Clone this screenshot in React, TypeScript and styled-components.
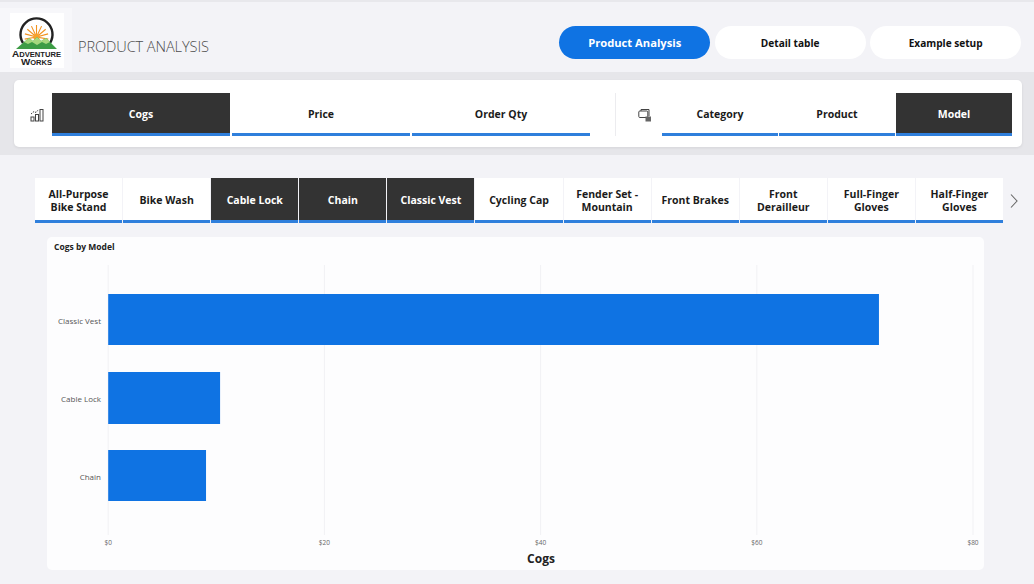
import styled, { createGlobalStyle } from 'styled-components';

const Global = createGlobalStyle`
  html, body {
    margin: 0;
    padding: 0;
    background: #f3f3f7;
    font-family: "Open Sans", "Noto Sans", "Liberation Sans", sans-serif;
  }
  * { box-sizing: border-box; }
`;

const Page = styled.div`
  width: 1034px;
  height: 584px;
  overflow: hidden;
  display: flex;
  flex-direction: column;
  background: #f3f3f7;
`;

const TopLine = styled.div`
  height: 2px;
  background: #e8e8ec;
`;

const Header = styled.header`
  height: 70px;
  display: flex;
  align-items: flex-start;
  padding: 6px 13px 0 0;
`;

const LogoBox = styled.div`
  width: 72px;
  height: 64px;
  padding: 5px 8px 4px 10px;
  background: #f7f7fa;
`;

const LogoFace = styled.div`
  width: 54px;
  height: 55px;
  background: #fff;
`;

const PageTitle = styled.h1`
  margin: 28px 0 0 6px;
  font-size: 14.6px;
  line-height: 20px;
  font-weight: 300;
  color: #4c4c4c;
  letter-spacing: -0.1px;
`;

const Nav = styled.nav`
  margin: 18px 0 0 auto;
  display: flex;
  gap: 4.8px;
`;

const Pill = styled.div<{ $active?: boolean }>`
  width: 150.7px;
  height: 33px;
  border-radius: 17px;
  display: flex;
  align-items: center;
  justify-content: center;
  font-size: ${p => (p.$active ? '11.2px' : '10.1px')};
  font-weight: 700;
  background: ${p => (p.$active ? '#0f73e3' : '#fff')};
  color: ${p => (p.$active ? '#fff' : '#111')};
`;

const FilterBand = styled.section`
  height: 83px;
  padding: 8px 12px 8px 14px;
  background: #e6e6ea;
`;

const FilterCard = styled.div`
  height: 67px;
  border-radius: 5px;
  background: #fff;
  display: flex;
  align-items: flex-start;
  padding-top: 13px;
  box-shadow: 0 1px 3px rgba(0, 0, 0, 0.08);
`;

const IconCell = styled.div<{ $w: number; $inset: number }>`
  width: ${p => p.$w}px;
  height: 43px;
  padding-left: ${p => p.$inset}px;
  display: flex;
  align-items: center;
  justify-content: center;
  flex: none;
`;

const TabGroup = styled.div<{ $gap: number }>`
  display: flex;
  gap: ${p => p.$gap}px;
`;

const Tab = styled.div<{ $w: number; $h?: number; $on?: boolean }>`
  width: ${p => p.$w}px;
  height: ${p => p.$h ?? 43}px;
  flex: none;
  display: flex;
  align-items: center;
  justify-content: center;
  text-align: center;
  white-space: pre-line;
  font-weight: 700;
  font-size: 10.5px;
  line-height: 13px;
  padding-top: 3px;
  background: ${p => (p.$on ? '#333333' : '#fff')};
  color: ${p => (p.$on ? '#fff' : '#1b1b1b')};
  border-bottom: 3px solid #2f7fdc;
`;

const Divider = styled.div`
  width: 1px;
  height: 43px;
  margin-left: 25px;
  background: #ececef;
  flex: none;
`;

const Body = styled.main`
  flex: 1;
  padding: 23px 0 0 35px;
`;

const ModelStrip = styled.div`
  display: flex;
  align-items: center;
  gap: 1px;
`;

const Chevron = styled.div`
  width: 20px;
  height: 20px;
  display: flex;
  align-items: center;
  justify-content: center;
`;

const ChartCard = styled.section`
  position: relative;
  width: 937px;
  height: 333px;
  margin: 14px 0 0 12px;
  background: #fdfdfe;
  border-radius: 5px;
`;

const ChartTitle = styled.h2`
  position: absolute;
  left: 7px;
  top: 4px;
  margin: 0;
  font-size: 8.5px;
  line-height: 12px;
  font-weight: 700;
  color: #222;
`;

const ChartSvg = styled.svg`
  display: block;
  font-family: "Open Sans", "Noto Sans", sans-serif;
`;

const metrics = [
  { label: 'Cogs', on: true },
  { label: 'Price' },
  { label: 'Order Qty' },
];

const levels = [
  { label: 'Category' },
  { label: 'Product' },
  { label: 'Model', on: true },
];

const models = [
  { label: 'All-Purpose\nBike Stand' },
  { label: 'Bike Wash' },
  { label: 'Cable Lock', on: true },
  { label: 'Chain', on: true },
  { label: 'Classic Vest', on: true },
  { label: 'Cycling Cap' },
  { label: 'Fender Set -\nMountain' },
  { label: 'Front Brakes' },
  { label: 'Front\nDerailleur' },
  { label: 'Full-Finger\nGloves' },
  { label: 'Half-Finger\nGloves' },
];

// chart coordinates are relative to the card
const x0 = 61.2;
const perDollar = 10.81;
const bars = [
  { label: 'Classic Vest', value: 71.3, y: 57, h: 51 },
  { label: 'Cable Lock', value: 10.35, y: 135, h: 52 },
  { label: 'Chain', value: 9.05, y: 213, h: 51 },
];
const ticks = [0, 20, 40, 60, 80];
const rays = [-90, -65, -40, -115, -140, -165, -15, 10, 170];

function Logo() {
  return (
    <svg width="54" height="55" viewBox="0 0 54 55">
      <g stroke="#f2921f" strokeWidth="1.1">
        {rays.map(a => (
          <line
            key={a}
            x1="26.5"
            y1="24"
            x2={26.5 + 12 * Math.cos((a * Math.PI) / 180)}
            y2={24 + 12 * Math.sin((a * Math.PI) / 180)}
          />
        ))}
      </g>
      <circle cx="26.5" cy="24" r="3.2" fill="#f6a12c" />
      <path d="M13 30 A16 16 0 1 1 40 30" fill="none" stroke="#222" strokeWidth="2.4" />
      <path d="M6 36 L14 29 L19 25 L23 28 L27 24 L31 28 L36 25 L40 29 L47 36 Z" fill="#3d9c45" />
      <path d="M14 29 L19 25 L23 28 L27 24 L31 28 L36 25 L40 29 L36 31 L32 29 L27 32 L22 29 L18 31 Z" fill="#a6d77e" />
      <text x="26.5" y="44" textAnchor="middle" fontFamily="Liberation Sans, sans-serif" fontWeight="700" fill="#222" fontSize="6.4" textLength="49" lengthAdjust="spacingAndGlyphs">
        <tspan fontSize="8.4">A</tspan>DVENTURE
      </text>
      <text x="26.5" y="51.5" textAnchor="middle" fontFamily="Liberation Sans, sans-serif" fontWeight="700" fill="#222" fontSize="6.4" textLength="31" lengthAdjust="spacingAndGlyphs">
        <tspan fontSize="8.4">W</tspan>ORKS
      </text>
    </svg>
  );
}

function MeasureIcon() {
  return (
    <svg width="14" height="14" viewBox="0 0 14 14" fill="none" stroke="#444" strokeWidth="1">
      <rect x="1" y="9" width="3" height="4" />
      <rect x="5.5" y="6.5" width="3" height="6.5" />
      <rect x="10" y="1.5" width="3" height="11.5" />
      <path d="M1 6 L4 3.5 L6 4.5 L8.5 1.5" strokeDasharray="1.5 1" />
    </svg>
  );
}

function LevelIcon() {
  return (
    <svg width="14" height="14" viewBox="0 0 14 14" fill="none" stroke="#444" strokeWidth="1">
      <path d="M3 3 V1.5 H11 V8" />
      <rect x="0.8" y="3" width="9" height="6.5" rx="1" />
      <rect x="7.5" y="8.5" width="5.5" height="5" fill="#666" stroke="none" />
    </svg>
  );
}

function Cogs() {
  return (
    <ChartSvg width="937" height="333" viewBox="0 0 937 333">
      {ticks.map(t => (
        <line key={t} x1={x0 + t * perDollar} x2={x0 + t * perDollar} y1="28" y2="298" stroke="#f1f1f4" strokeWidth="1" />
      ))}
      {bars.map(b => (
        <g key={b.label}>
          <rect x={x0} y={b.y} width={b.value * perDollar} height={b.h} fill="#0f73e3" />
          <text x="54" y={b.y + b.h / 2 + 4} textAnchor="end" fontSize="8" fill="#555">{b.label}</text>
        </g>
      ))}
      {ticks.map(t => (
        <text key={t} x={x0 + t * perDollar} y="308" textAnchor="middle" fontSize="6.5" fill="#666">${t}</text>
      ))}
      <text x="494" y="326" textAnchor="middle" fontSize="12" fontWeight="700" fill="#222">Cogs</text>
    </ChartSvg>
  );
}

export default function App() {
  return (
    <Page>
      <Global />
      <TopLine />
      <Header>
        <LogoBox><LogoFace><Logo /></LogoFace></LogoBox>
        <PageTitle>PRODUCT ANALYSIS</PageTitle>
        <Nav>
          <Pill $active>Product Analysis</Pill>
          <Pill>Detail table</Pill>
          <Pill>Example setup</Pill>
        </Nav>
      </Header>
      <FilterBand>
        <FilterCard>
          <IconCell $w={38} $inset={8}><MeasureIcon /></IconCell>
          <TabGroup $gap={2}>
            {metrics.map(m => (
              <Tab key={m.label} $w={178} $on={m.on}>{m.label}</Tab>
            ))}
          </TabGroup>
          <Divider />
          <IconCell $w={46} $inset={12}><LevelIcon /></IconCell>
          <TabGroup $gap={1}>
            {levels.map(l => (
              <Tab key={l.label} $w={116} $on={l.on}>{l.label}</Tab>
            ))}
          </TabGroup>
        </FilterCard>
      </FilterBand>
      <Body>
        <ModelStrip>
          {models.map(m => (
            <Tab key={m.label} $w={87.1} $h={45} $on={m.on}>{m.label}</Tab>
          ))}
          <Chevron>
            <svg width="10" height="16" viewBox="0 0 10 16" fill="none" stroke="#666" strokeWidth="1.1">
              <path d="M2 1.5 L8 8 L2 14.5" />
            </svg>
          </Chevron>
        </ModelStrip>
        <ChartCard>
          <ChartTitle>Cogs by Model</ChartTitle>
          <Cogs />
        </ChartCard>
      </Body>
    </Page>
  );
}
